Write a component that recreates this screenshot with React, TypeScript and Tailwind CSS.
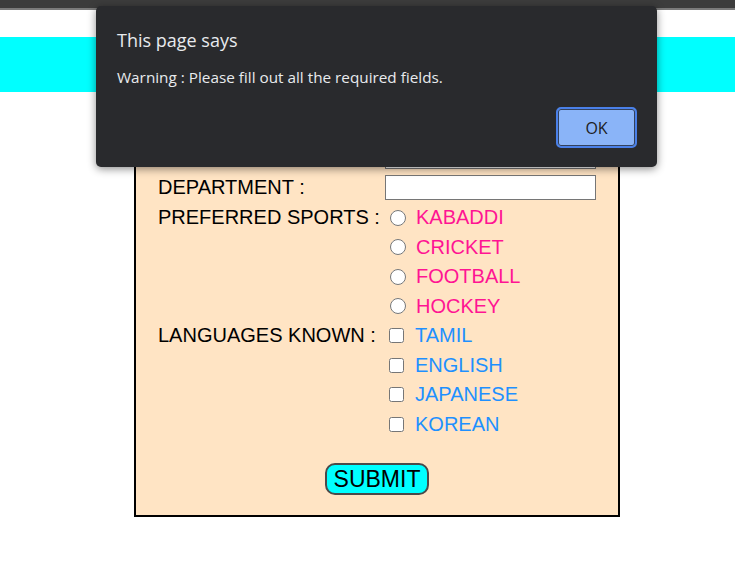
import React from "react";

const sans = { fontFamily: '"Liberation Sans", Arial, sans-serif' };
const ui = { fontFamily: '"Open Sans", "Noto Sans", sans-serif' };

function InputRow({ label }: { label: string }) {
  return (
    <div className="flex h-[31px] items-center">
      <div className="w-[227px] text-[20px] leading-[23px] text-black">{label}</div>
      <input
        type="text"
        className="h-[25px] w-[211px] border border-[#767676] bg-white outline-none"
      />
    </div>
  );
}

function OptionRow({
  label,
  text,
  kind,
}: {
  label?: string;
  text: string;
  kind: "radio" | "checkbox";
}) {
  return (
    <div className="flex h-[29.5px] items-center">
      <div className="w-[227px] text-[20px] leading-[23px] text-black">{label ?? ""}</div>
      {kind === "radio" ? (
        <input type="radio" name="sport" className="m-0 ml-[5px] h-[16px] w-[16px]" />
      ) : (
        <input type="checkbox" className="m-0 ml-[4px] h-[15px] w-[15px]" />
      )}
      <span
        className={
          kind === "radio"
            ? "ml-[10px] text-[20px] leading-[23px] text-[#ff1493]"
            : "ml-[11px] text-[20px] leading-[23px] text-[#1e90ff]"
        }
      >
        {text}
      </span>
    </div>
  );
}

export default function App() {
  return (
    <div className="relative h-[568px] w-full overflow-hidden bg-white" style={sans}>
      <div className="h-[8px] bg-[#3c3c3c]" />
      <div className="h-[2px] bg-[#7b7b7b]" />
      <div className="mt-[27px] h-[55px] bg-[#00ffff]" />

      <div className="ml-[134px] mt-[8px] w-[486px] border-2 border-black bg-[#ffe4c4] pb-[20px] pl-[22px] pt-[8px]">
        <InputRow label="NAME :" />
        <InputRow label="REGISTER NO :" />
        <InputRow label="DEPARTMENT :" />
        <OptionRow label="PREFERRED SPORTS :" text="KABADDI" kind="radio" />
        <OptionRow text="CRICKET" kind="radio" />
        <OptionRow text="FOOTBALL" kind="radio" />
        <OptionRow text="HOCKEY" kind="radio" />
        <OptionRow label="LANGUAGES KNOWN :" text="TAMIL" kind="checkbox" />
        <OptionRow text="ENGLISH" kind="checkbox" />
        <OptionRow text="JAPANESE" kind="checkbox" />
        <OptionRow text="KOREAN" kind="checkbox" />
        <div className="mt-[24px] flex justify-center pr-[22px]">
          <button className="flex h-[32px] w-[104px] items-center justify-center rounded-[10px] border-2 border-[#4a4a4a] bg-[#00ffff] text-[23px] leading-none text-black">
            SUBMIT
          </button>
        </div>
      </div>

      <div
        className="absolute left-[96px] top-[6px] flex h-[161px] w-[561px] flex-col rounded-[5px] bg-[#292a2d] shadow-[0_2px_8px_rgba(0,0,0,0.45)]"
        style={ui}
      >
        <div className="pl-[21px] pt-[22px] text-[18px] leading-[24px] text-[#e8eaed]">
          This page says
        </div>
        <div className="pl-[21px] pt-[15px] text-[15.3px] leading-[20px] text-[#e8eaed]">
          Warning : Please fill out all the required fields.
        </div>
        <div className="mt-auto flex justify-end pb-[19px] pr-[20px]">
          <button className="flex h-[41px] w-[81px] items-center justify-center rounded-[5px] border-2 border-[#4a80e8] bg-[#8ab4f8] text-[16px] text-[#202124] shadow-[inset_0_0_0_1px_#33415c]">
            OK
          </button>
        </div>
      </div>
    </div>
  );
}
